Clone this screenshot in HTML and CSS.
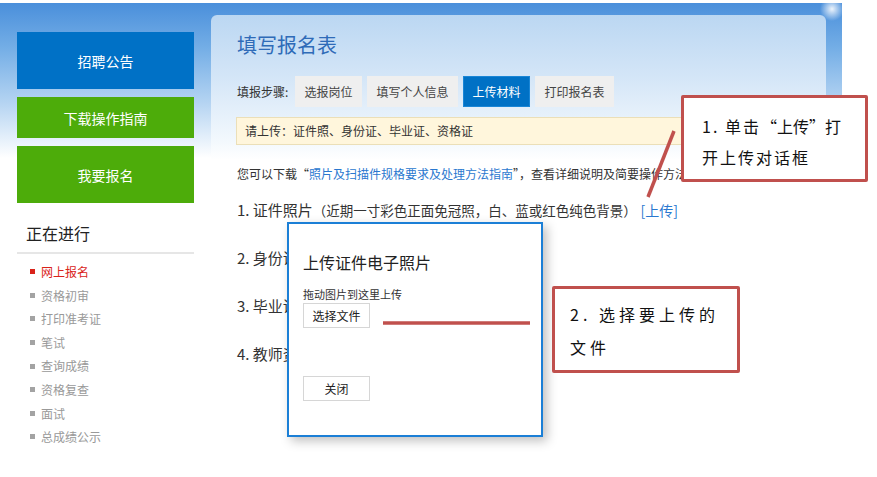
FILE: index.html
```html
<!DOCTYPE html>
<html>
  <head>
    <meta charset="utf-8">
    <title>填写报名表</title>
    <link rel="stylesheet" href="styles.css">
  </head>
  <body>
    <div class="page">
      <div class="side">
        <a class="side-btn btn-blue">招聘公告</a>
        <a class="side-btn btn-green short">下载操作指南</a>
        <a class="side-btn btn-green">我要报名</a>

        <h3 class="side-title">正在进行</h3>
        <ul class="steps-list">
          <li class="active">网上报名</li>
          <li>资格初审</li>
          <li>打印准考证</li>
          <li>笔试</li>
          <li>查询成绩</li>
          <li>资格复查</li>
          <li>面试</li>
          <li>总成绩公示</li>
        </ul>
      </div>

      <div class="main">
        <h1 class="main-title">填写报名表</h1>

        <div class="step-bar">
          <span class="step-label">填报步骤:</span>
          <span class="tab">选报岗位</span>
          <span class="tab wide">填写个人信息</span>
          <span class="tab current">上传材料</span>
          <span class="tab mid">打印报名表</span>
        </div>

        <div class="notice">请上传：证件照、身份证、毕业证、资格证</div>

        <p class="hint">您可以下载“<a>照片及扫描件规格要求及处理方法指南</a>”，查看详细说明及简要操作方法。</p>

        <ol class="uploads">
          <li><b>1. 证件照片</b><small>（近期一寸彩色正面免冠照，白、蓝或红色纯色背景）</small> <a>[上传]</a></li>
          <li><b>2. 身份证</b><small>（正反面扫描件，正面在上）</small> <a>[上传]</a></li>
          <li><b>3. 毕业证</b><small>（学历证书扫描件）</small> <a>[上传]</a></li>
          <li><b>4. 教师资格证</b><small>（扫描件）</small> <a>[上传]</a></li>
        </ol>
      </div>
    </div>

    <!-- upload dialog -->
    <div class="dialog">
      <h2 class="dialog-title">上传证件电子照片</h2>
      <div class="drop-tip">拖动图片到这里上传</div>
      <button class="dlg-btn">选择文件</button>
      <button class="dlg-btn close">关闭</button>
    </div>

    <!-- annotation callouts -->
    <div class="callout callout-1">1.&nbsp;单击<q>“上传”</q>打<br>开上传对话框</div>
    <div class="callout callout-2">2.&nbsp;选择要上传的<br>文件</div>

    <svg class="pointers" width="877" height="477">
      <line x1="674" y1="131" x2="648" y2="197" />
      <line x1="383" y1="323" x2="530" y2="323" />
    </svg>
  </body>
</html>
```

FILE: styles.css
```css
body {
  margin: 0;
  font-family: "Noto Sans CJK SC", "Microsoft YaHei", sans-serif;
  background: #fff;
  color: #333;
  width: 877px;
  height: 477px;
  overflow: hidden;
  position: relative;
}

.page {
  width: 842px;
  height: 474px;
  margin-top: 3px;
  display: flex;
  background:
    radial-gradient(circle at 832px 6px, rgba(255, 255, 255, 0.9) 0, rgba(255, 255, 255, 0) 12px),
    linear-gradient(to bottom, #4a8fdb 0, #74aee6 45px, #b5d4f2 100px, #fff 155px);
  background-size: 100% 160px;
  background-repeat: no-repeat;
}

/* left column */
.side {
  width: 177px;
  margin-left: 17px;
  padding-top: 29px;
}

.side-btn {
  display: flex;
  align-items: center;
  justify-content: center;
  height: 57px;
  margin-bottom: 8px;
  color: #fff;
  font-size: 14px;
}

.btn-blue {
  background-color: #0071c6;
}

.btn-green {
  background-color: #4dac0a;
}

.side-btn.short {
  height: 41px;
}

.side-title {
  margin: 18px 0 0;
  padding: 0 0 7px 9px;
  font-size: 16px;
  font-weight: normal;
  color: #222;
  border-bottom: 2px solid #e6e6e6;
}

.steps-list {
  list-style: none;
  margin: 6px 0 0;
  padding: 0 0 0 13px;
}

.steps-list li {
  height: 23.6px;
  line-height: 23.6px;
  font-size: 12px;
  color: #999;
  display: flex;
  align-items: center;
}

.steps-list li::before {
  content: "";
  width: 5px;
  height: 5px;
  background: #a3a3a3;
  margin-right: 6px;
}

.steps-list li.active {
  color: #d9231a;
}

.steps-list li.active::before {
  background: #d9231a;
}

/* main panel */
.main {
  width: 615px;
  height: 459px;
  margin: 12px 0 0 17px;
  padding: 0 26px;
  box-sizing: border-box;
  border-radius: 6px 6px 0 0;
  background: linear-gradient(to bottom, #bbd7f2 0, #d3e5f7 60px, #f2f8fd 125px, #fff 145px);
}

.main-title {
  margin: 0;
  padding-top: 16px;
  height: 45px;
  box-sizing: border-box;
  font-size: 20px;
  line-height: 28px;
  font-weight: normal;
  color: #2f6bb8;
}

.step-bar {
  display: flex;
  align-items: center;
  gap: 5px;
  margin-top: 16px;
  font-size: 12px;
}

.step-label {
  width: 53px;
  white-space: nowrap;
  color: #333;
}

.tab {
  width: 67px;
  height: 31px;
  line-height: 31px;
  text-align: center;
  background: #efefef;
  color: #444;
}

.tab.wide {
  width: 91px;
}

.tab.mid {
  width: 79px;
}

.tab.current {
  background: #0071c5;
  color: #fff;
  box-shadow: inset 0 0 0 1px #1a86d6;
}

.notice {
  margin-top: 10px;
  height: 28px;
  line-height: 26px;
  box-sizing: border-box;
  padding-left: 8px;
  margin-left: -1px;
  background: #fff6dc;
  border: 1px solid #ebdfb8;
  font-size: 12px;
  color: #333;
}

.hint {
  margin: 20px 0 0;
  font-size: 12px;
  line-height: 18px;
  color: #333;
}

.hint a,
.uploads a {
  color: #2a78cf;
}

.uploads {
  list-style: none;
  margin: 15px 0 0;
  padding: 0;
}

.uploads li {
  height: 48px;
  line-height: 22px;
  white-space: nowrap;
  color: #333;
}

.uploads b {
  font-weight: normal;
  font-size: 15px;
}

.uploads small {
  font-size: 13.5px;
}

.uploads a {
  font-size: 14px;
}

/* dialog */
.dialog {
  position: absolute;
  left: 287px;
  top: 222px;
  width: 256px;
  height: 215px;
  box-sizing: border-box;
  padding: 0 14px;
  background: #fff;
  border: 2px solid #1b7fd6;
  box-shadow: 4px 4px 10px rgba(0, 0, 0, 0.25);
}

.dialog-title {
  margin: 26px 0 0;
  font-size: 16px;
  line-height: 24px;
  font-weight: normal;
  color: #222;
}

.drop-tip {
  margin-top: 12px;
  font-size: 11px;
  line-height: 16px;
  color: #333;
}

.dlg-btn {
  display: block;
  width: 67px;
  height: 25px;
  margin-top: 1px;
  padding: 0;
  font-family: inherit;
  font-size: 12px;
  color: #222;
  background: #fff;
  border: 1px solid #d6d6d6;
}

.dlg-btn.close {
  margin-top: 48px;
}

/* annotation boxes */
.callout {
  position: absolute;
  box-sizing: border-box;
  background: #fff;
  border: 3px solid #c0504d;
  border-radius: 2px;
  font-size: 16px;
  white-space: nowrap;
  color: #111;
}

.callout q {
  quotes: none;
  letter-spacing: 0;
}

.callout-1 {
  left: 681px;
  top: 95px;
  width: 187px;
  height: 87px;
  padding: 13px 6px 0 18px;
  line-height: 31px;
  letter-spacing: 2px;
}

.callout-2 {
  left: 552px;
  top: 286px;
  width: 188px;
  height: 87px;
  padding: 9px 6px 0 15px;
  line-height: 33px;
  letter-spacing: 4px;
}

.pointers {
  position: absolute;
  left: 0;
  top: 0;
  pointer-events: none;
}

.pointers line {
  stroke: #c0504d;
  stroke-width: 3.5;
}
```
